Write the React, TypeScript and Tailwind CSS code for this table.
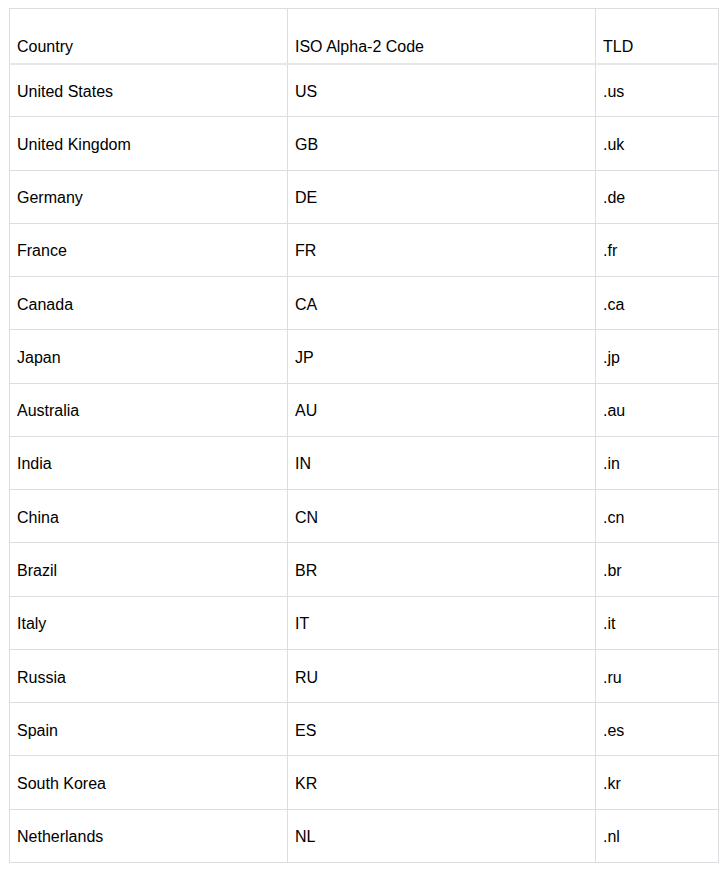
import React from "react";

// ==================================================
// DATA
// ==================================================
interface Country {
  name: string;
  code: string;
  tld: string;
}

const countries: Country[] = [
  { name: "United States", code: "US", tld: ".us" },
  { name: "United Kingdom", code: "GB", tld: ".uk" },
  { name: "Germany", code: "DE", tld: ".de" },
  { name: "France", code: "FR", tld: ".fr" },
  { name: "Canada", code: "CA", tld: ".ca" },
  { name: "Japan", code: "JP", tld: ".jp" },
  { name: "Australia", code: "AU", tld: ".au" },
  { name: "India", code: "IN", tld: ".in" },
  { name: "China", code: "CN", tld: ".cn" },
  { name: "Brazil", code: "BR", tld: ".br" },
  { name: "Italy", code: "IT", tld: ".it" },
  { name: "Russia", code: "RU", tld: ".ru" },
  { name: "Spain", code: "ES", tld: ".es" },
  { name: "South Korea", code: "KR", tld: ".kr" },
  { name: "Netherlands", code: "NL", tld: ".nl" },
];

// ==================================================
// TABLE
// ==================================================
export default function App() {
  const td = "h-[53.27px] border border-[#dcdce2] pl-[7px] pr-2 pt-[3px] align-middle leading-6";
  const th =
    "h-[55px] border border-b-2 border-[#dcdce2] border-b-[#e6e6ec] pl-[7px] pr-2 pb-[4px] text-left align-bottom font-normal leading-6";

  return (
    <div className="bg-white pl-[9px] pt-2 font-['Liberation_Sans',Arial,sans-serif] text-[16px] text-black">
      <table className="w-[709px] table-fixed border-collapse">
        <colgroup>
          <col className="w-[278px]" />
          <col className="w-[308px]" />
          <col className="w-[123px]" />
        </colgroup>
        <thead>
          <tr>
            <th className={th}>Country</th>
            <th className={th}>ISO Alpha-2 Code</th>
            <th className={th}>TLD</th>
          </tr>
        </thead>
        <tbody>
          {countries.map((c) => (
            <tr key={c.code}>
              <td className={td}>{c.name}</td>
              <td className={td}>{c.code}</td>
              <td className={td}>{c.tld}</td>
            </tr>
          ))}
        </tbody>
      </table>
    </div>
  );
}
